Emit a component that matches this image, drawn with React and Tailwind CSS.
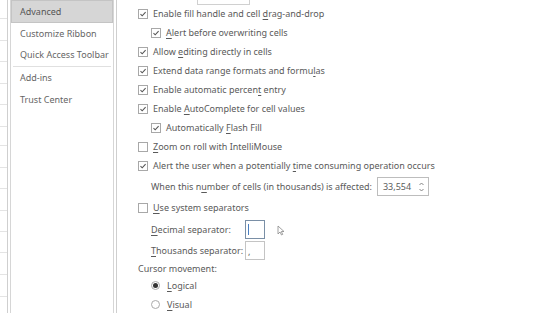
import React from "react";

const F = { fontFamily: '"Noto Sans", "Open Sans", sans-serif' };

function Check({ checked }) {
  return (
    <span className="inline-flex h-[10px] w-[10px] shrink-0 items-center justify-center border border-[#a8a8a8] bg-white">
      {checked && (
        <svg width="8" height="8" viewBox="0 0 8 8">
          <path d="M1.5 4.2 L3.2 5.8 L6.6 2.2" fill="none" stroke="#555" strokeWidth="1.1" />
        </svg>
      )}
    </span>
  );
}

function U({ children }) {
  return <span className="underline decoration-[0.5px] underline-offset-[1.5px]">{children}</span>;
}

function CRow({ checked, indent, children }) {
  return (
    <div className={`flex h-[19px] shrink-0 items-center gap-[5px] ${indent ? "pl-[34px]" : "pl-[21px]"}`}>
      <Check checked={checked} />
      <span>{children}</span>
    </div>
  );
}

export default function App() {
  const grid = [18, 40, 61, 83, 104, 126, 145, 167, 188, 210, 231, 252, 274, 296];
  return (
    <div className="flex h-[313px] w-[550px] overflow-hidden bg-white text-[9px] text-[#5a5a5a]" style={F}>
      <div className="relative w-[7px] shrink-0 bg-white">
        {grid.map((y) => (
          <div key={y} className="absolute left-0 h-px w-[7px] bg-[#e4e4e4]" style={{ top: y }} />
        ))}
      </div>
      <div className="w-px shrink-0 bg-[#cfcfcf]" />
      <div className="w-[2px] shrink-0 bg-white" />
      <div className="w-px shrink-0 bg-[#d6d6d6]" />
      <div className="flex w-[102px] shrink-0 flex-col bg-white text-[#666]">
        <div className="flex h-[23px] items-center border border-[#c4c4c4] bg-[#d6d6d6] pl-[8px] text-[#555]">Advanced</div>
        <div className="flex h-[21px] items-center pl-[9px]">Customize Ribbon</div>
        <div className="flex h-[21px] items-center pl-[9px]">Quick Access Toolbar</div>
        <div className="mx-[2px] mt-[1px] h-px bg-[#e0e0e0]" />
        <div className="flex h-[22px] items-center pl-[9px]">Add-ins</div>
        <div className="flex h-[21px] items-center pl-[9px]">Trust Center</div>
      </div>
      <div className="w-px shrink-0 bg-[#d6d6d6]" />
      <div className="w-[2px] shrink-0 bg-white" />
      <div className="w-px shrink-0 bg-[#cfcfcf]" />
      <div className="relative flex flex-1 flex-col pt-[4px]">
        <div className="absolute left-[80px] top-[-2px] h-[7px] w-[53px] border border-[#d0d0d0]" />
        <CRow checked>Enable fill handle and cell <U>d</U>rag-and-drop</CRow>
        <CRow checked indent><U>A</U>lert before overwriting cells</CRow>
        <CRow checked>Allow <U>e</U>diting directly in cells</CRow>
        <CRow checked>Extend data range formats and formu<U>l</U>as</CRow>
        <CRow checked>Enable automatic percen<U>t</U> entry</CRow>
        <CRow checked>Enable <U>A</U>utoComplete for cell values</CRow>
        <CRow checked indent>Automatically <U>F</U>lash Fill</CRow>
        <CRow><U>Z</U>oom on roll with IntelliMouse</CRow>
        <CRow checked>Alert the user when a potentially <U>t</U>ime consuming operation occurs</CRow>
        <div className="flex h-[23px] shrink-0 items-center pl-[34px]">
          <span>When this n<U>u</U>mber of cells (in thousands) is affected:</span>
          <div className="ml-[5px] flex h-[19px] w-[52px] items-center justify-between border border-[#bdbdbd] pl-[5px] pr-[3px]">
            <span>33,554</span>
            <svg width="7" height="12" viewBox="0 0 7 12">
              <path d="M1.5 4 L3.5 2 L5.5 4" fill="none" stroke="#777" strokeWidth="0.9" />
              <path d="M1.5 8 L3.5 10 L5.5 8" fill="none" stroke="#777" strokeWidth="0.9" />
            </svg>
          </div>
        </div>
        <CRow><U>U</U>se system separators</CRow>
        <div className="mt-[2px] flex h-[21px] shrink-0 items-center pl-[34px]">
          <span className="w-[94px]"><U>D</U>ecimal separator:</span>
          <div className="flex h-[19px] w-[20px] items-center border border-[#7a8fa6] pl-[2px]">
            <span className="h-[11px] w-px bg-[#4a7fc1]" />
          </div>
          <svg className="ml-[12px] mt-[2px]" width="8" height="11" viewBox="0 0 8 11">
            <path d="M1 1 L1 9 L3 7 L4.5 10 L5.7 9.4 L4.3 6.5 L7 6.5 Z" fill="#fff" stroke="#888" strokeWidth="0.8" />
          </svg>
        </div>
        <div className="flex h-[21px] shrink-0 items-center pl-[34px]">
          <span className="w-[94px]"><U>T</U>housands separator:</span>
          <div className="flex h-[19px] w-[20px] items-end border border-[#c4c4c4] pb-[3px] pl-[2px] leading-none">,</div>
        </div>
        <div className="flex h-[15px] shrink-0 items-center pl-[21px]">Cursor movement:</div>
        <div className="flex h-[19px] shrink-0 items-center gap-[7px] pl-[34px]">
          <span className="flex h-[9px] w-[9px] items-center justify-center rounded-full border border-[#aaa]">
            <span className="h-[5px] w-[5px] rounded-full bg-[#333]" />
          </span>
          <span><U>L</U>ogical</span>
        </div>
        <div className="flex h-[19px] shrink-0 items-center gap-[7px] pl-[34px]">
          <span className="h-[9px] w-[9px] rounded-full border border-[#aaa]" />
          <span><U>V</U>isual</span>
        </div>
      </div>
    </div>
  );
}
